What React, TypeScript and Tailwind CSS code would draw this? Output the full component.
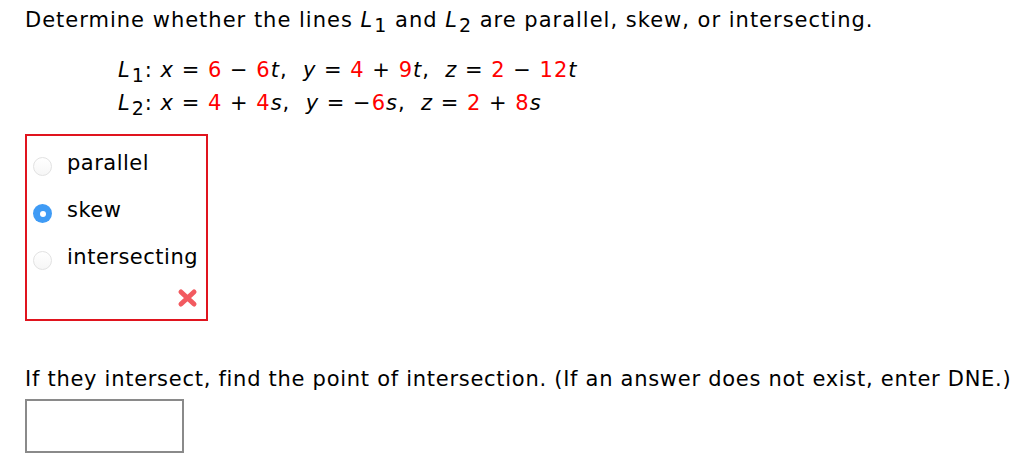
import React from 'react';

const R = ({ children }: { children: React.ReactNode }) => <span className="text-[#ff0000]">{children}</span>;
const I = ({ children }: { children: React.ReactNode }) => <span className="italic">{children}</span>;

// L with subscript index
const Line = ({ n }: { n: string }) => (
    <span>
        <I>L</I>
        <sub className="text-[19px] -bottom-[5px] ml-[1px]">{n}</sub>
    </span>
);

function Radio({ checked }: { checked?: boolean }) {
    if (checked) {
        return (
            <span className="flex h-[19px] w-[19px] shrink-0 items-center justify-center rounded-full bg-[#3f9bf5]">
                <span className="block h-[6px] w-[6px] rounded-full bg-white" />
            </span>
        );
    }
    return <span className="block h-[19px] w-[19px] shrink-0 rounded-full border border-[#e2e2e2] bg-gradient-to-b from-white to-[#f6f6f6]" />;
}

const options = [
    { label: 'parallel', checked: false },
    { label: 'skew', checked: true },
    { label: 'intersecting', checked: false },
];

export default function App() {
    return (
        <div className="h-[464px] w-[1024px] overflow-hidden bg-white pl-[25px] pt-[8px] text-[21px] leading-[24px] text-black" style={{ fontFamily: '"DejaVu Sans", Verdana, sans-serif' }}>
            {/* Question */}
            <p className="tracking-[1px]">
                Determine whether the lines <Line n="1" /> and <Line n="2" /> are parallel, skew, or intersecting.
            </p>

            <div className="mt-[26px] flex flex-col gap-[9px] pl-[93px] tracking-[1px]">
                <div>
                    <Line n="1" />: <I>x</I> = <R>6</R> − <R>6</R><I>t</I>,&nbsp; <I>y</I> = <R>4</R> + <R>9</R><I>t</I>,&nbsp; <I>z</I> = <R>2</R> − <R>12</R><I>t</I>
                </div>
                <div>
                    <Line n="2" />: <I>x</I> = <R>4</R> + <R>4</R><I>s</I>,&nbsp; <I>y</I> = −<R>6</R><I>s</I>,&nbsp; <I>z</I> = <R>2</R> + <R>8</R><I>s</I>
                </div>
            </div>

            {/* Answer choices */}
            <div className="mt-[19px] flex h-[187px] w-[183px] flex-col border-2 border-[#e0141e] pl-[6px] pt-[15px] tracking-[0.5px]">
                <div className="flex flex-col gap-[22px]">
                    {options.map((o) => (
                        <div key={o.label} className="flex items-start gap-[15px]">
                            <span className="mt-[6px] block"><Radio checked={o.checked} /></span>
                            <span>{o.label}</span>
                        </div>
                    ))}
                </div>
                <div className="mt-auto mb-[11px] flex justify-end pr-[8px]">
                    <svg width="21" height="20" viewBox="0 0 21 20">
                        <path d="M4 4 L17 16 M17 4 L4 16" stroke="#f25a60" strokeWidth="5" strokeLinecap="round" />
                    </svg>
                </div>
            </div>

            <p className="mt-[46px] tracking-[0.72px]">
                If they intersect, find the point of intersection. (If an answer does not exist, enter DNE.)
            </p>
            <div className="mt-[8px] h-[54px] w-[159px] border-2 border-[#8a8a8a] bg-white" />
        </div>
    );
}
